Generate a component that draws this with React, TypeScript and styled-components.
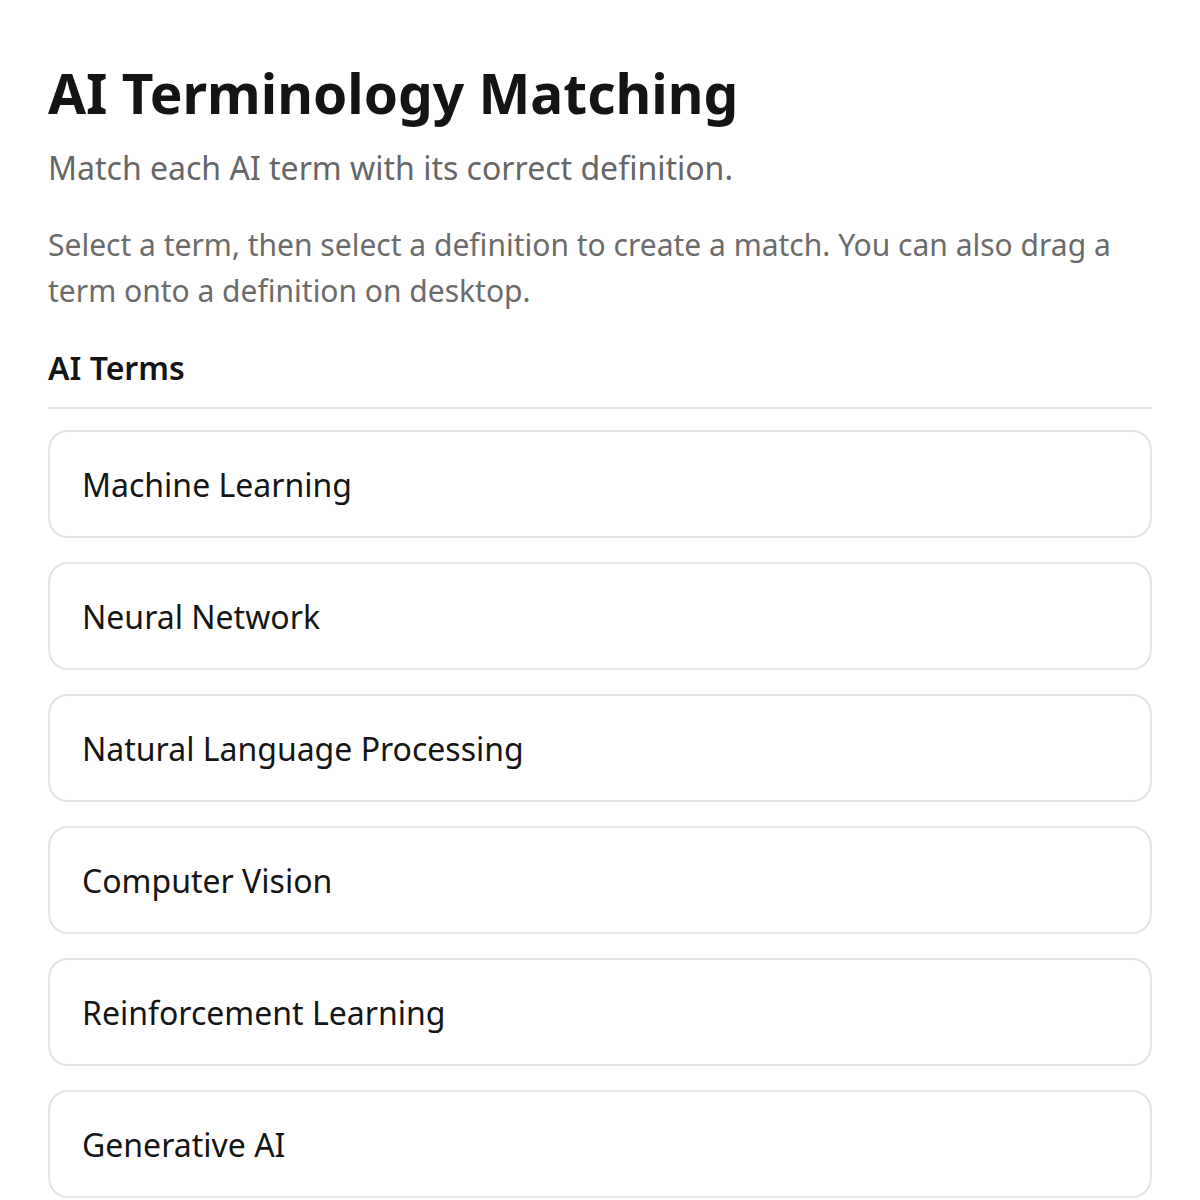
import React from 'react';
import styled, { createGlobalStyle } from 'styled-components';

const GlobalStyle = createGlobalStyle`
  body {
    margin: 0;
    background: #fff;
    font-family: "Noto Sans", "Open Sans", sans-serif;
    color: #111;
  }
`;

const Page = styled.main`
  padding: 60px 48px 0;
  display: flex;
  flex-direction: column;
`;

const Title = styled.h1`
  margin: 0;
  font-size: 55px;
  line-height: 66px;
  font-weight: 700;
  color: #141414;
`;

const Subtitle = styled.p`
  margin: 19px 0 0;
  font-size: 32px;
  line-height: 46px;
  color: #666;
`;

const Instructions = styled.p`
  margin: 31px 0 0;
  font-size: 30px;
  line-height: 46px;
  color: #6b6b6b;
`;

const SectionTitle = styled.h2`
  margin: 31px 0 0;
  padding-bottom: 16px;
  font-size: 32px;
  line-height: 46px;
  font-weight: 600;
  color: #141414;
  border-bottom: 2px solid #e6e6e6;
`;

const TermList = styled.ul`
  list-style: none;
  margin: 21px 0 0;
  padding: 0;
  display: flex;
  flex-direction: column;
  gap: 24px;
`;

const TermCard = styled.li`
  height: 108px;
  box-sizing: border-box;
  display: flex;
  align-items: center;
  padding: 0 32px;
  border: 2px solid #e4e4e4;
  border-radius: 20px;
  font-size: 32px;
  color: #151515;
  cursor: pointer;
`;

const terms = [
  'Machine Learning',
  'Neural Network',
  'Natural Language Processing',
  'Computer Vision',
  'Reinforcement Learning',
  'Generative AI',
];

const App: React.FC = () => (
  <>
    <GlobalStyle />
    <Page>
      <Title>AI Terminology Matching</Title>
      <Subtitle>Match each AI term with its correct definition.</Subtitle>
      <Instructions>
        Select a term, then select a definition to create a match. You can also drag a term onto a
        definition on desktop.
      </Instructions>
      <SectionTitle>AI Terms</SectionTitle>
      <TermList>
        {terms.map(t => (
          <TermCard key={t}>{t}</TermCard>
        ))}
      </TermList>
    </Page>
  </>
);

export default App;
